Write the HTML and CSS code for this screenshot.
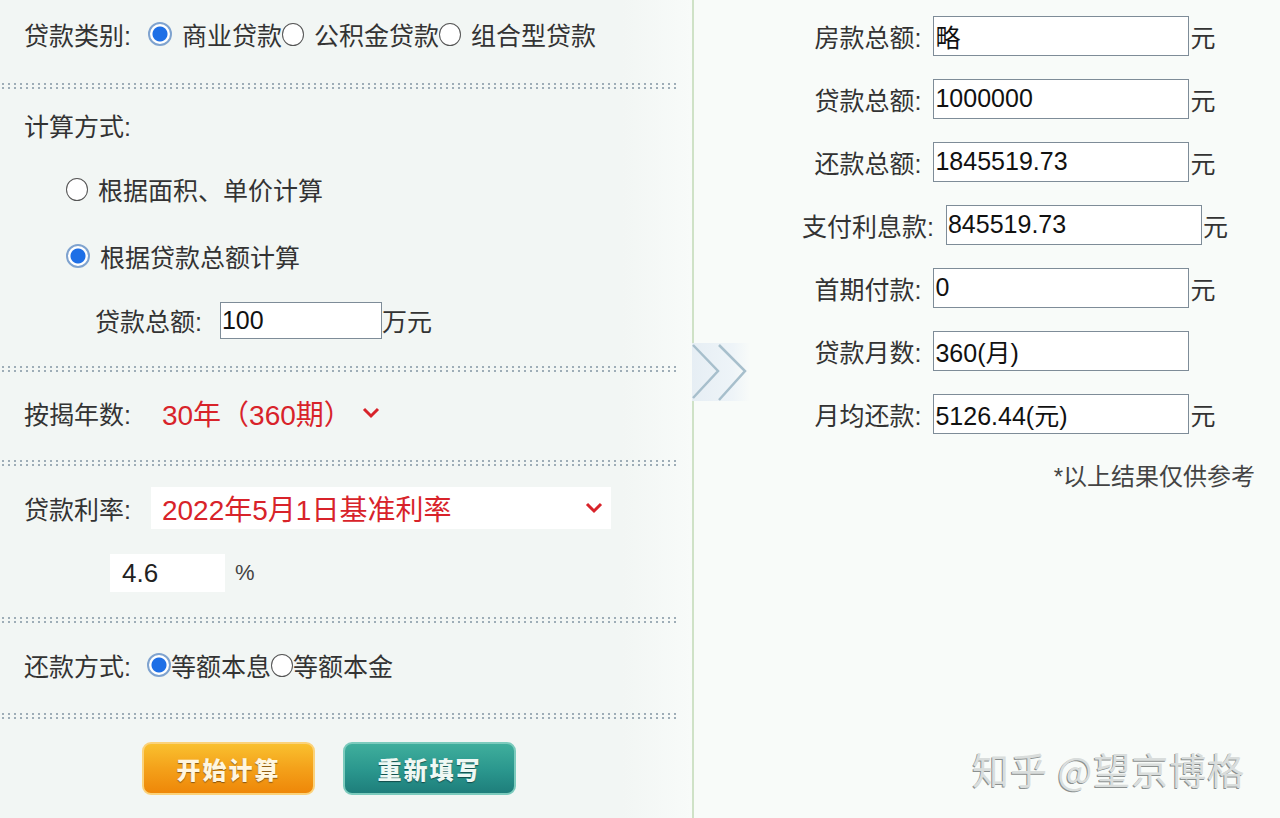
FILE: index.html
```html
<!DOCTYPE html>
<html lang="zh-CN">
<head>
<meta charset="UTF-8" />
<title>房贷计算器</title>
<link rel="stylesheet" href="styles.css">
</head>
<body>
<div class="page">
    <div class="left">
        <div class="row row-type">
            <span class="label">贷款类别:</span>
            <span class="radio on first"></span><span class="opt">商业贷款</span>
            <span class="radio"></span><span class="opt">公积金贷款</span>
            <span class="radio"></span><span class="opt">组合型贷款</span>
        </div>
        <div class="dots"></div>

        <div class="row row-mode-title"><span class="label">计算方式:</span></div>
        <div class="row row-mode a"><span class="radio"></span><span class="opt">根据面积、单价计算</span></div>
        <div class="row row-mode b"><span class="radio on"></span><span class="opt">根据贷款总额计算</span></div>
        <div class="row row-total">
            <span class="label">贷款总额:</span>
            <input class="box small" type="text" value="100" readonly>
            <span>万元</span>
        </div>
        <div class="dots"></div>

        <div class="row row-years">
            <span class="label">按揭年数:</span>
            <span class="select">30年（360期）</span>
            <svg class="chev" width="18" height="12" viewBox="0 0 18 12"><path d="M2 2 L9 9 L16 2" fill="none" stroke="#d8232a" stroke-width="3"/></svg>
        </div>
        <div class="dots"></div>

        <div class="row row-rate">
            <span class="label">贷款利率:</span>
            <div class="select wide">
                <span>2022年5月1日基准利率</span>
                <svg class="chev" width="18" height="12" viewBox="0 0 18 12"><path d="M2 2 L9 9 L16 2" fill="none" stroke="#d8232a" stroke-width="3"/></svg>
            </div>
        </div>
        <div class="row row-pct">
            <span class="pct-box">4.6</span>
            <span class="pct">%</span>
        </div>
        <div class="dots"></div>

        <div class="row row-pay">
            <span class="label">还款方式:</span>
            <span class="radio on"></span><span class="opt tight">等额本息</span>
            <span class="radio"></span><span class="opt tight">等额本金</span>
        </div>
        <div class="dots"></div>

        <div class="buttons">
            <button class="btn orange">开始计算</button>
            <button class="btn teal">重新填写</button>
        </div>
    </div>

    <div class="right">
        <div class="res-row"><span class="res-label">房款总额:</span><input class="box" type="text" value="略" readonly><span class="unit">元</span></div>
        <div class="res-row"><span class="res-label">贷款总额:</span><input class="box" type="text" value="1000000" readonly><span class="unit">元</span></div>
        <div class="res-row"><span class="res-label">还款总额:</span><input class="box" type="text" value="1845519.73" readonly><span class="unit">元</span></div>
        <div class="res-row"><span class="res-label">支付利息款:</span><input class="box" type="text" value="845519.73" readonly><span class="unit">元</span></div>
        <div class="res-row"><span class="res-label">首期付款:</span><input class="box" type="text" value="0" readonly><span class="unit">元</span></div>
        <div class="res-row"><span class="res-label">贷款月数:</span><input class="box" type="text" value="360(月)" readonly><span class="unit hidden">元</span></div>
        <div class="res-row"><span class="res-label">月均还款:</span><input class="box" type="text" value="5126.44(元)" readonly><span class="unit">元</span></div>
        <p class="note">*以上结果仅供参考</p>

        <div class="watermark">知乎 @望京博格</div>
    </div>

    <div class="arrow">
        <svg width="58" height="58" viewBox="0 0 58 58">
            <path d="M1 2 L26 28 L1 55" fill="none" stroke="#a7bfcc" stroke-width="2.5"/>
            <path d="M27 2 L53 28 L27 57" fill="none" stroke="#a7bfcc" stroke-width="2.5"/>
        </svg>
    </div>
</div>
</body>
</html>
```

FILE: styles.css
```css
*{margin:0;padding:0;box-sizing:border-box}
body{
    width:1280px;
    height:818px;
    overflow:hidden;
    font-family:"Liberation Sans","Noto Sans CJK SC",sans-serif;
    font-size:25px;
    color:#333;
}
.page{
    position:relative;
    display:flex;
    height:818px;
}
.left{
    width:694px;
    height:100%;
    background:linear-gradient(to right,#f2f6f4 90%,#f8fbf9);
    border-right:2px solid #cfe2c7;
}
.row{
    display:flex;
    align-items:center;
    padding-left:24px;
    padding-bottom:6px;
}
.label{white-space:nowrap}
.row-type{height:82px;padding-bottom:14px}
.row-mode-title{height:76px}
.row-mode{padding-left:66px}
.row-mode.a{height:52px}
.row-mode.b{height:81px}
.row-total{height:48px;padding-left:95px;margin-bottom:18px}
.row-years{height:86px}
.row-rate{height:87px}
.row-pct{height:44px;margin-bottom:18px;padding-left:110px}
.row-pay{height:88px}

.dots{
    width:676px;
    height:8px;
    background-image:radial-gradient(circle,#9eadb7 1px,transparent 1.4px);
    background-size:6px 4px;
}

.radio{
    width:22px;
    height:23px;
    border-radius:50%;
    border:1.5px solid #555;
    background:#fff;
    flex-shrink:0;
}
.radio.on{
    width:24px;
    height:24px;
    border:2px solid #7fa3cf;
    background:radial-gradient(circle,#1e6fe6 0,#1e6fe6 7px,#fff 8px);
}
.radio.first{margin-left:17px}
.opt{margin-left:10px;white-space:nowrap}
.opt.tight{margin-left:0}
.row-pay .radio.on{margin-left:16px}

.box{
    width:256px;
    height:40px;
    border:1.5px solid #7e8c98;
    background:#fff;
    font-family:"Liberation Sans","Noto Sans CJK SC",sans-serif;
    font-size:25px;
    color:#111;
    padding-left:1px;
    outline:none;
}
.box.small{
    width:162px;
    height:37px;
    margin-left:18px;
}

.select{
    color:#d8232a;
    font-size:28px;
    margin-left:31px;
    white-space:nowrap;
}
.row-years .chev{margin-left:10px}
.select.wide{
    display:flex;
    align-items:center;
    justify-content:space-between;
    width:460px;
    height:42px;
    margin-left:20px;
    padding:0 8px 0 11px;
    background:#fff;
}
.pct-box{
    width:115px;
    padding-left:12px;
    background:#fff;
    line-height:38px;
    color:#222;
    font-size:26px;
}
.pct{margin-left:10px;font-size:22px;color:#444}

.buttons{
    display:flex;
    gap:28px;
    padding-left:142px;
    margin-top:22px;
}
.btn{
    width:173px;
    height:53px;
    border-radius:9px;
    font-family:"Noto Sans CJK SC",sans-serif;
    font-weight:900;
    font-size:24px;
    letter-spacing:2px;
    color:#fff6e0;
    text-shadow:0 1px 1px rgba(90,60,20,0.7);
    cursor:pointer;
}
.btn.orange{
    background:linear-gradient(to bottom,#f9c02f,#f4a11a 50%,#ee8708);
    border:2px solid #fbd27a;
}
.btn.teal{
    background:linear-gradient(to bottom,#3fae9c,#2a968d 55%,#1e7e7b);
    border:2px solid #7ccbbd;
    color:#eef8f4;
    text-shadow:0 1px 1px rgba(10,50,50,0.7);
}

.right{
    flex:1;
    position:relative;
    background:#f8fbf9;
    padding-top:4px;
    padding-left:56px;
}
.res-row{
    height:63px;
    display:flex;
    align-items:center;
    justify-content:center;
}
.res-label{margin-right:12px;white-space:nowrap}
.unit{margin-left:1px}
.unit.hidden{visibility:hidden}
.note{
    text-align:right;
    padding-right:25px;
    margin-top:12px;
    font-size:24px;
    color:#444;
}

.watermark{
    position:absolute;
    left:278px;
    top:742px;
    font-family:"Noto Sans CJK SC",sans-serif;
    font-size:37px;
    color:#d9dddc;
    text-shadow:-1px 1px 0 #8b908f;
    letter-spacing:1px;
    white-space:nowrap;
}

.arrow{
    position:absolute;
    left:692px;
    top:343px;
    width:58px;
    height:58px;
    background:linear-gradient(to right,#e6eef4,#eef4f8 70%,rgba(240,245,248,0));
}
```
